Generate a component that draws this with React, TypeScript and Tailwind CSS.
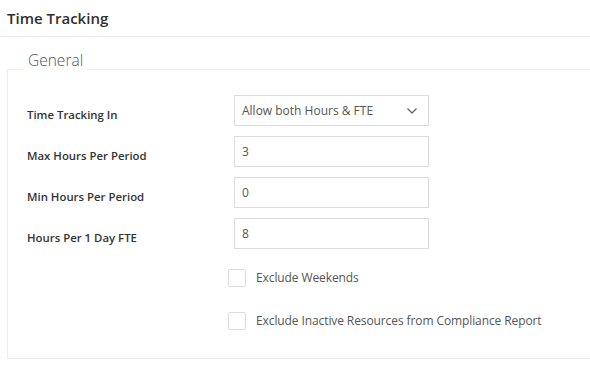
import React from "react";

const font = { fontFamily: '"Open Sans", "Noto Sans", sans-serif' };

function Label({ children }: { children: React.ReactNode }) {
  return (
    <div className="pt-[12px] text-[11.4px] font-semibold leading-[16px] text-[#333333]">
      {children}
    </div>
  );
}

function TextInput({ value }: { value: string }) {
  return (
    <div className="flex h-[31px] w-[195px] items-center border border-[#dcdcdc] bg-white px-[7px] text-[12px] text-[#555555]">
      {value}
    </div>
  );
}

function Checkbox({ label }: { label: string }) {
  return (
    <div className="flex items-center gap-[10px]">
      <div className="h-[18px] w-[18px] rounded-[2px] border border-[#dddddd] bg-white" />
      <span className="text-[12px] tracking-[-0.1px] text-[#555555]">{label}</span>
    </div>
  );
}

export default function App() {
  return (
    <div className="h-[371px] w-[590px] overflow-hidden bg-white" style={font}>
      <div className="flex h-[37px] items-center border-b border-[#ebebeb] px-[7px]">
        <h1 className="text-[15px] font-semibold leading-[20px] text-[#2f2f2f]">Time Tracking</h1>
      </div>
      <fieldset className="ml-[7px] mt-[13px] w-[600px] border border-[#ededed] pb-[28px]">
        <legend className="ml-[16px] px-[4px] pb-[18px] text-[15.5px] font-light leading-[20px] text-[#555555]">
          General
        </legend>
        <div className="mt-[7px] grid grid-cols-[207px_1fr] gap-y-[10px] pl-[19px]">
          <Label>Time Tracking In</Label>
          <div className="flex h-[31px] w-[195px] items-center justify-between border border-[#dcdcdc] bg-white pl-[7px] pr-[10px] text-[12px] text-[#555555]">
            <span>Allow both Hours &amp; FTE</span>
            <svg width="12" height="8" viewBox="0 0 12 8" fill="none">
              <path d="M1.5 1.5 L6 6 L10.5 1.5" stroke="#666666" strokeWidth="1.3" />
            </svg>
          </div>
          <Label>Max Hours Per Period</Label>
          <TextInput value="3" />
          <Label>Min Hours Per Period</Label>
          <TextInput value="0" />
          <Label>Hours Per 1 Day FTE</Label>
          <TextInput value="8" />
        </div>
        <div className="ml-[220px] mt-[20px] flex flex-col gap-[25px]">
          <Checkbox label="Exclude Weekends" />
          <Checkbox label="Exclude Inactive Resources from Compliance Report" />
        </div>
      </fieldset>
    </div>
  );
}
